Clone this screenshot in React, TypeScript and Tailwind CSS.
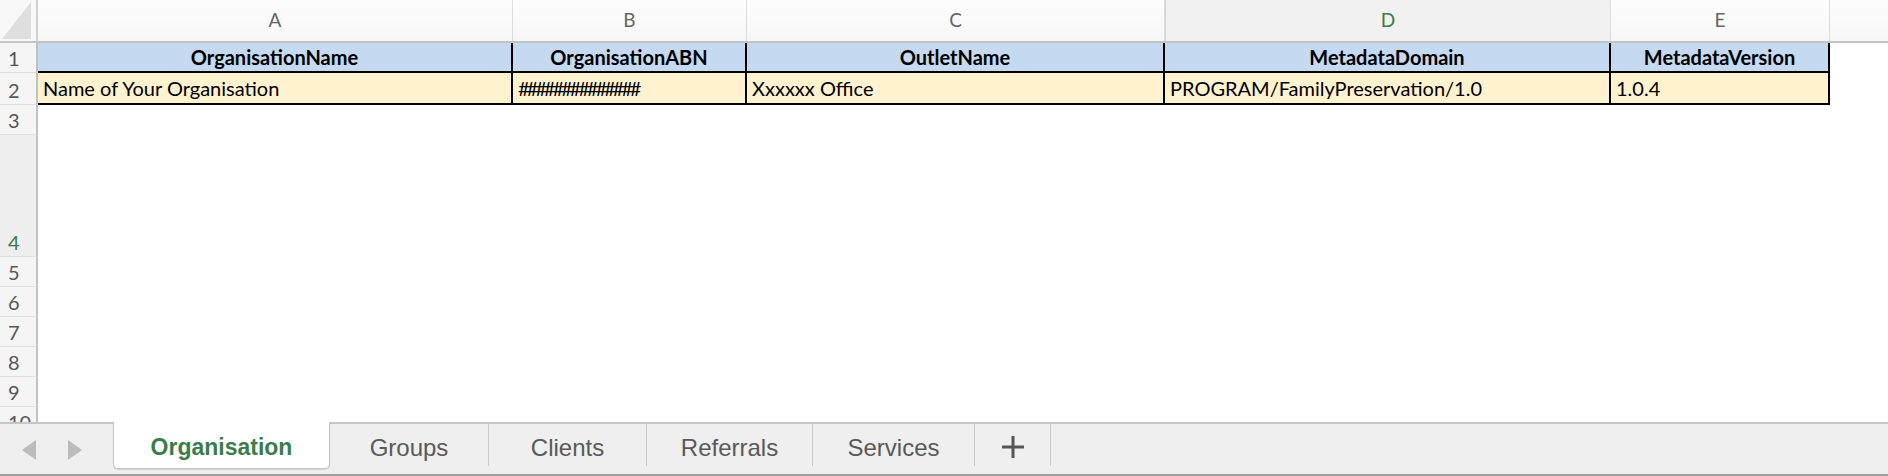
import React from "react";

const COLS = [
  { key: "A", w: "w-[475px]" },
  { key: "B", w: "w-[234px]" },
  { key: "C", w: "w-[418px]" },
  { key: "D", w: "w-[446px]" },
  { key: "E", w: "w-[219px]" },
];

const HEAD = ["OrganisationName", "OrganisationABN", "OutletName", "MetadataDomain", "MetadataVersion"];
const DATA = ["Name of Your Organisation", "##############", "Xxxxxx Office", "PROGRAM/FamilyPreservation/1.0", "1.0.4"];

function RowHeader({ n, h, selected }: { n: number; h: string; selected?: boolean }) {
  return (
    <div
      className={`w-[38px] shrink-0 ${h} flex items-end border-r-2 border-r-[#c2c2c2] border-b border-b-[#dfdfdf] ${
        selected ? "bg-[#eeeeee] text-[#3a7b47]" : "bg-[#f5f5f5] text-[#575757]"
      }`}
    >
      <div className="h-[29px] flex items-center pl-[8px] text-[20px] leading-none font-['Lato',sans-serif]">{n}</div>
    </div>
  );
}

function EmptyRow({ n, h, selected }: { n: number; h: string; selected?: boolean }) {
  return (
    <div className={`flex shrink-0 ${h}`}>
      <RowHeader n={n} h={h} selected={selected} />
      <div className="flex-1 bg-white" />
    </div>
  );
}

export default function App() {
  return (
    <div className="w-[1888px] h-[476px] flex flex-col bg-white overflow-hidden font-['Lato',sans-serif]">
      <div className="flex-1 min-h-0 overflow-hidden flex flex-col">
        {/* column header */}
        <div className="flex shrink-0 h-[43px] border-b-2 border-[#c4c4c4] bg-gradient-to-b from-[#fdfdfd] to-[#f7f7f7]">
          <div className="w-[38px] shrink-0 border-r-2 border-[#d0d0d0] bg-[#f8f8f8] flex items-end justify-start">
            <svg width="34" height="41" viewBox="0 0 34 41">
              <polygon points="31,2 31,39 2,39" fill="#dedede" />
            </svg>
          </div>
          {COLS.map((c) => (
            <div
              key={c.key}
              className={`${c.w} shrink-0 flex items-center justify-center border-r border-[#dcdcdc] text-[19px] ${
                c.key === "D" ? "bg-[#f1f1f1] text-[#3a7b47] border-l border-l-[#d4d4d4]" : "text-[#666666]"
              }`}
            >
              {c.key}
            </div>
          ))}
          <div className="flex-1" />
        </div>

        {/* row 1 */}
        <div className="flex shrink-0 h-[30px]">
          <RowHeader n={1} h="h-[30px]" />
          {COLS.map((c, i) => (
            <div
              key={c.key}
              className={`${c.w} shrink-0 bg-[#c5d9f0] border-r-2 border-b-2 border-black flex items-center justify-center text-[20px] font-bold text-black`}
            >
              {HEAD[i]}
            </div>
          ))}
          <div className="flex-1 bg-white" />
        </div>

        {/* row 2 */}
        <div className="flex shrink-0 h-[32px]">
          <RowHeader n={2} h="h-[32px]" />
          {COLS.map((c, i) => (
            <div
              key={c.key}
              className={`${c.w} shrink-0 bg-[#fff2cf] border-r-2 border-b-2 border-black flex items-center pl-[5px] text-[20px] text-black whitespace-nowrap overflow-hidden ${
                i === 1 ? "tracking-[-3px]" : ""
              }`}
            >
              {DATA[i]}
            </div>
          ))}
          <div className="flex-1 bg-white" />
        </div>

        <EmptyRow n={3} h="h-[30px]" />
        <EmptyRow n={4} h="h-[122px]" selected />
        <EmptyRow n={5} h="h-[30px]" />
        <EmptyRow n={6} h="h-[30px]" />
        <EmptyRow n={7} h="h-[30px]" />
        <EmptyRow n={8} h="h-[30px]" />
        <EmptyRow n={9} h="h-[30px]" />
        <EmptyRow n={10} h="h-[30px]" />
      </div>

      {/* sheet tabs */}
      <div className="h-[54px] shrink-0 flex bg-[#efefef] border-t-2 border-[#c6c6c6] border-b-2 border-b-[#9d9d9d] font-['Liberation_Sans',Arial,sans-serif]">
        <div className="w-[113px] shrink-0 flex items-center gap-[32px] pl-[22px] pt-[2px]">
          <svg width="14" height="20" viewBox="0 0 14 20">
            <polygon points="14,0 14,20 0,10" fill="#bcbcbc" />
          </svg>
          <svg width="14" height="20" viewBox="0 0 14 20">
            <polygon points="0,0 0,20 14,10" fill="#bcbcbc" />
          </svg>
        </div>
        <div className="w-[217px] shrink-0 -mt-[2px] h-[47px] pt-[4px] bg-white border-x border-b border-[#c4c4c4] rounded-b-[5px] shadow-[0_1px_1px_rgba(0,0,0,0.12)] flex items-center justify-center text-[23px] font-bold text-[#3b7d4a]">
          Organisation
        </div>
        {[
          { t: "Groups", w: "w-[159px]" },
          { t: "Clients", w: "w-[158px]" },
          { t: "Referrals", w: "w-[166px]" },
          { t: "Services", w: "w-[162px]" },
        ].map((tab) => (
          <div key={tab.t} className={`${tab.w} shrink-0 h-[42px] border-r border-[#c9c9c9] flex items-center justify-center text-[24px] text-[#595959] pt-[5px]`}>
            {tab.t}
          </div>
        ))}
        <div className="w-[76px] shrink-0 h-[42px] border-r border-[#c9c9c9] flex items-center justify-center pt-[4px]">
          <svg width="22" height="22" viewBox="0 0 22 22">
            <rect x="9.5" y="0" width="3" height="22" fill="#555555" />
            <rect x="0" y="9.5" width="22" height="3" fill="#555555" />
          </svg>
        </div>
        <div className="flex-1" />
      </div>
    </div>
  );
}
